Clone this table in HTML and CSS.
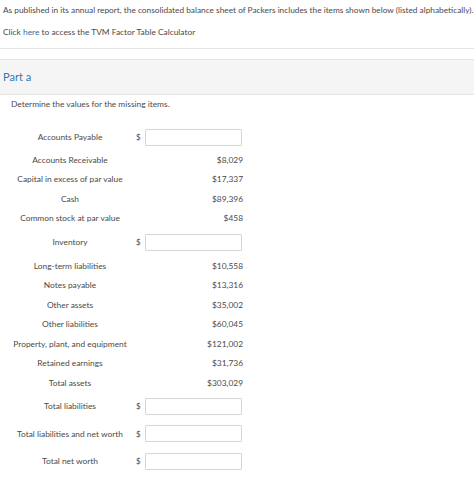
FILE: index.html
```html
<!DOCTYPE html>
<html>
<head>
<meta charset="utf-8">
<link rel="stylesheet" href="styles.css">
</head>
<body>
<div class="intro">
  <p class="lead">As published in its annual report, the consolidated balance sheet of Packers includes the items shown below (listed alphabetically).</p>
  <p class="lead">Click <a class="link" href="#">here</a> to access the TVM Factor Table Calculator</p>
</div>
<div class="part-head">Part a</div>
<div class="part-body">
  <p class="prompt">Determine the values for the missing items.</p>
  <div class="sheet">
    <div class="row row-input first"><span class="label">Accounts Payable</span><span class="cur">$</span><span class="field"><span class="box"></span></span></div>
    <div class="row"><span class="label">Accounts Receivable</span><span class="cur"></span><span class="value">$8,029</span></div>
    <div class="row"><span class="label">Capital in excess of par value</span><span class="cur"></span><span class="value">$17,337</span></div>
    <div class="row"><span class="label">Cash</span><span class="cur"></span><span class="value">$89,396</span></div>
    <div class="row"><span class="label">Common stock at par value</span><span class="cur"></span><span class="value">$458</span></div>
    <div class="row row-input mid"><span class="label">Inventory</span><span class="cur">$</span><span class="field"><span class="box"></span></span></div>
    <div class="row"><span class="label">Long-term liabilities</span><span class="cur"></span><span class="value">$10,558</span></div>
    <div class="row"><span class="label">Notes payable</span><span class="cur"></span><span class="value">$13,316</span></div>
    <div class="row"><span class="label">Other assets</span><span class="cur"></span><span class="value">$35,002</span></div>
    <div class="row"><span class="label">Other liabilities</span><span class="cur"></span><span class="value">$60,045</span></div>
    <div class="row"><span class="label">Property, plant, and equipment</span><span class="cur"></span><span class="value">$121,002</span></div>
    <div class="row"><span class="label">Retained earnings</span><span class="cur"></span><span class="value">$31,736</span></div>
    <div class="row"><span class="label">Total assets</span><span class="cur"></span><span class="value">$303,029</span></div>
    <div class="row row-input tail"><span class="label">Total liabilities</span><span class="cur">$</span><span class="field"><span class="box"></span></span></div>
    <div class="row row-input tail"><span class="label">Total liabilities and net worth</span><span class="cur">$</span><span class="field"><span class="box"></span></span></div>
    <div class="row row-input tail"><span class="label">Total net worth</span><span class="cur">$</span><span class="field"><span class="box"></span></span></div>
  </div>
</div>
</body>
</html>
```
FILE: styles.css
```css
html, body {
  margin: 0;
  padding: 0;
  background: #ffffff;
}
body {
  font-family: Lato, "Open Sans", sans-serif;
  color: #4a4a4a;
  font-size: 8.4px;
}
.intro {
  padding: 5px 3px 10px 3px;
  border-bottom: 1px solid #e4e4e4;
}
.lead {
  margin: 0;
  line-height: 11px;
  white-space: nowrap;
}
.lead:first-child {
  font-size: 8.3px;
}
.lead + .lead {
  margin-top: 11px;
}
.link {
  color: #2d6fae;
  text-decoration: none;
}
.part-head {
  margin-top: 10px;
  background: #f5f5f5;
  border-top: 1px solid #e6e6e6;
  border-bottom: 1px solid #e6e6e6;
  color: #3576b0;
  font-size: 11px;
  padding: 10px 3px 10px 3px;
  line-height: 14px;
}
.prompt {
  margin: 4px 0 0 11px;
  line-height: 10px;
}
.sheet {
  display: flex;
  flex-direction: column;
  margin-top: 15px;
}
.row {
  display: flex;
  align-items: center;
  height: 19.5px;
}
.row-input {
  height: 26px;
}
.row-input.mid {
  height: 28px;
}
.row-input.tail {
  height: 27.5px;
}
.label {
  width: 140px;
  text-align: center;
}
.cur {
  width: 5px;
  text-align: left;
  margin-left: -4px;
  margin-right: 2px;
  font-size: 8px;
}
.field {
  margin-left: 2px;
}
.box {
  display: block;
  width: 95px;
  height: 15px;
  border: 1px solid #d6d6d6;
  border-radius: 1px;
  background: #fff;
}
.value {
  width: 100px;
  text-align: right;
}
```
